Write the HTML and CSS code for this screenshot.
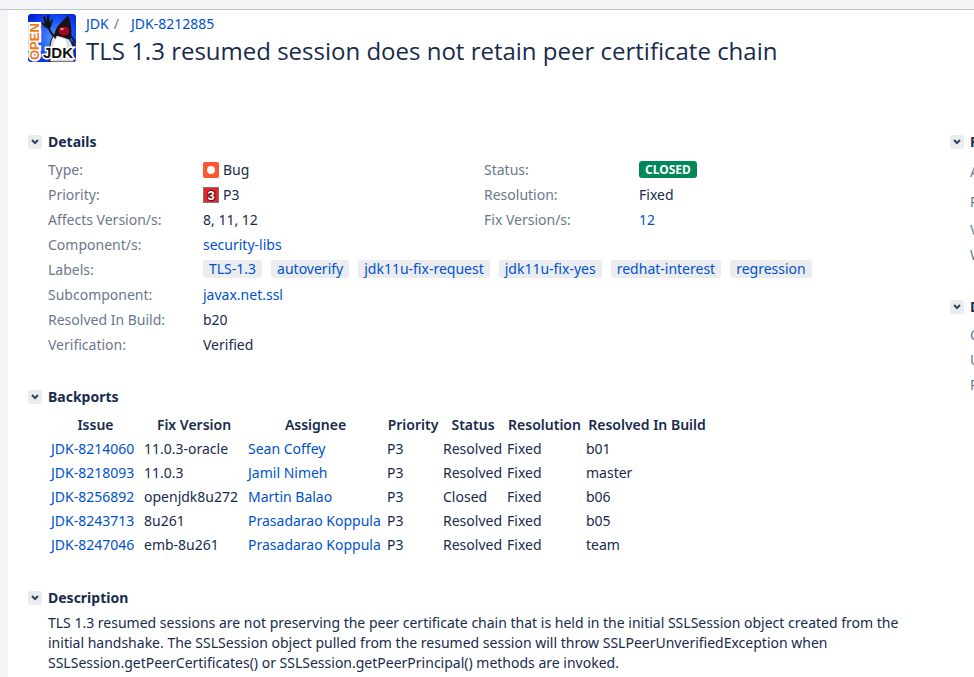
FILE: index.html
```html
<!DOCTYPE html>
<html lang="en">

<head>
    <meta charset="utf-8">
    <title>[JDK-8212885] TLS 1.3 resumed session does not retain peer certificate chain</title>
    <meta name="viewport" content="width=device-width, initial-scale=1.0">
    <link rel="stylesheet" href="styles.css">
</head>

<body>
    <div class="page">
        <header class="issue-header">
            <svg class="project-logo" viewBox="0 0 48 48" role="img" aria-label="OpenJDK">
                <defs>
                    <radialGradient id="sky" cx="55%" cy="50%" r="65%">
                        <stop offset="0" stop-color="#5a9cff" />
                        <stop offset="0.6" stop-color="#1450f5" />
                        <stop offset="1" stop-color="#0620d8" />
                    </radialGradient>
                    <clipPath id="logo-clip"><rect width="48" height="48" rx="3" /></clipPath>
                </defs>
                <g clip-path="url(#logo-clip)">
                    <rect width="48" height="48" fill="url(#sky)" />
                    <path d="M27 20c-5 5-6 13-5 28h24c1-10-1-18-5-23z" fill="#dcdce2" stroke="#111" />
                    <path d="M29 23c-4 6-5 12-4 20h12c3-7 2-14 0-18z" fill="#fff" />
                    <path d="M40 1C36 7 27 11 26 23c4-3 12 2 17 2C44 17 43 8 40 1z" fill="#151518" />
                    <path d="M43 22c2 2 3 5 5 7M44 28l3 4" fill="none" stroke="#151518" stroke-width="1.5" />
                    <path d="M28 24c-4-3-6-6-8-12" fill="none" stroke="#151518" stroke-width="2" />
                    <path d="M17 13l-4-4 1-1 3 2-2-7 2-1 2 6 0-7h2l1 8 2-4 1 1-2 7-3 2z" fill="#151518" />
                    <ellipse cx="36" cy="17" rx="6" ry="5" fill="#9c0c24" stroke="#32040c" />
                    <ellipse cx="34" cy="15" rx="2" ry="1" fill="#ef8b98" />
                    <text class="logo-open" transform="translate(11 46) rotate(-90)">OPEN</text>
                    <text class="logo-jdk" x="15" y="44">JDK</text>
                </g>
            </svg>
            <div class="issue-heading">
                <nav class="breadcrumbs" aria-label="Breadcrumb">
                    <a href="#">JDK</a><span class="separator">/</span><a href="#">JDK-8212885</a>
                </nav>
                <h1>TLS 1.3 resumed session does not retain peer certificate chain</h1>
            </div>
        </header>

        <div class="issue-body">
            <main class="issue-main">
                <section class="module">
                    <div class="module-header">
                        <button class="toggle" type="button" aria-label="Toggle details"><svg viewBox="0 0 14 14"><path d="M4 5l3 3 3-3" /></svg></button>
                        <h2>Details</h2>
                    </div>
                    <div class="module-content">
                        <dl class="details">
                            <div class="item">
                                <dt>Type:</dt>
                                <dd class="with-icon">
                                    <svg viewBox="0 0 16 16"><rect width="16" height="16" rx="2" fill="#ff5630" /><circle cx="8" cy="8" r="4" fill="#fff" /></svg>
                                    Bug
                                </dd>
                            </div>
                            <div class="item">
                                <dt>Status:</dt>
                                <dd><span class="lozenge">Closed</span></dd>
                            </div>
                            <div class="item">
                                <dt>Priority:</dt>
                                <dd class="with-icon">
                                    <svg viewBox="0 0 16 16"><rect x="0.5" y="0.5" width="15" height="15" fill="#e5242a" stroke="#777" /><text class="priority-digit" x="8" y="13">3</text></svg>
                                    P3
                                </dd>
                            </div>
                            <div class="item">
                                <dt>Resolution:</dt>
                                <dd>Fixed</dd>
                            </div>
                            <div class="item">
                                <dt>Affects Version/s:</dt>
                                <dd>8, 11, 12</dd>
                            </div>
                            <div class="item">
                                <dt>Fix Version/s:</dt>
                                <dd><a href="#">12</a></dd>
                            </div>
                            <div class="item full">
                                <dt>Component/s:</dt>
                                <dd><a href="#">security-libs</a></dd>
                            </div>
                            <div class="item full">
                                <dt>Labels:</dt>
                                <dd class="labels">
                                    <a href="#">TLS-1.3</a>
                                    <a href="#">autoverify</a>
                                    <a href="#">jdk11u-fix-request</a>
                                    <a href="#">jdk11u-fix-yes</a>
                                    <a href="#">redhat-interest</a>
                                    <a href="#">regression</a>
                                </dd>
                            </div>
                            <div class="item full">
                                <dt>Subcomponent:</dt>
                                <dd><a href="#">javax.net.ssl</a></dd>
                            </div>
                            <div class="item full">
                                <dt>Resolved In Build:</dt>
                                <dd>b20</dd>
                            </div>
                            <div class="item full">
                                <dt>Verification:</dt>
                                <dd>Verified</dd>
                            </div>
                        </dl>
                    </div>
                </section>

                <section class="module">
                    <div class="module-header">
                        <button class="toggle" type="button" aria-label="Toggle backports"><svg viewBox="0 0 14 14"><path d="M4 5l3 3 3-3" /></svg></button>
                        <h2>Backports</h2>
                    </div>
                    <div class="module-content">
                        <table class="backports">
                            <colgroup>
                                <col class="col-issue">
                                <col class="col-version">
                                <col class="col-assignee">
                                <col class="col-priority">
                                <col class="col-status">
                                <col class="col-resolution">
                                <col class="col-build">
                            </colgroup>
                            <thead>
                                <tr>
                                    <th>Issue</th>
                                    <th>Fix Version</th>
                                    <th>Assignee</th>
                                    <th>Priority</th>
                                    <th>Status</th>
                                    <th>Resolution</th>
                                    <th>Resolved In Build</th>
                                </tr>
                            </thead>
                            <tbody>
                                <tr>
                                    <td><a href="#">JDK-8214060</a></td>
                                    <td>11.0.3-oracle</td>
                                    <td><a href="#">Sean Coffey</a></td>
                                    <td>P3</td>
                                    <td>Resolved</td>
                                    <td>Fixed</td>
                                    <td>b01</td>
                                </tr>
                                <tr>
                                    <td><a href="#">JDK-8218093</a></td>
                                    <td>11.0.3</td>
                                    <td><a href="#">Jamil Nimeh</a></td>
                                    <td>P3</td>
                                    <td>Resolved</td>
                                    <td>Fixed</td>
                                    <td>master</td>
                                </tr>
                                <tr>
                                    <td><a href="#">JDK-8256892</a></td>
                                    <td>openjdk8u272</td>
                                    <td><a href="#">Martin Balao</a></td>
                                    <td>P3</td>
                                    <td>Closed</td>
                                    <td>Fixed</td>
                                    <td>b06</td>
                                </tr>
                                <tr>
                                    <td><a href="#">JDK-8243713</a></td>
                                    <td>8u261</td>
                                    <td><a href="#">Prasadarao Koppula</a></td>
                                    <td>P3</td>
                                    <td>Resolved</td>
                                    <td>Fixed</td>
                                    <td>b05</td>
                                </tr>
                                <tr>
                                    <td><a href="#">JDK-8247046</a></td>
                                    <td>emb-8u261</td>
                                    <td><a href="#">Prasadarao Koppula</a></td>
                                    <td>P3</td>
                                    <td>Resolved</td>
                                    <td>Fixed</td>
                                    <td>team</td>
                                </tr>
                            </tbody>
                        </table>
                    </div>
                </section>

                <section class="module">
                    <div class="module-header">
                        <button class="toggle" type="button" aria-label="Toggle description"><svg viewBox="0 0 14 14"><path d="M4 5l3 3 3-3" /></svg></button>
                        <h2>Description</h2>
                    </div>
                    <div class="module-content">
                        <p>TLS 1.3 resumed sessions are not preserving the peer certificate chain that is held in the initial SSLSession object created from the initial handshake. The SSLSession object pulled from the resumed session will throw SSLPeerUnverifiedException when SSLSession.getPeerCertificates() or SSLSession.getPeerPrincipal() methods are invoked.</p>
                    </div>
                </section>
            </main>

            <aside class="issue-side">
                <section class="module">
                    <div class="module-header">
                        <button class="toggle" type="button" aria-label="Toggle people"><svg viewBox="0 0 14 14"><path d="M4 5l3 3 3-3" /></svg></button>
                        <h2>People</h2>
                    </div>
                    <dl class="module-content">
                        <dt class="person">Assignee:</dt>
                        <dt class="person">Reporter:</dt>
                        <dt>Votes:</dt>
                        <dt>Watchers:</dt>
                    </dl>
                </section>
                <section class="module">
                    <div class="module-header">
                        <button class="toggle" type="button" aria-label="Toggle dates"><svg viewBox="0 0 14 14"><path d="M4 5l3 3 3-3" /></svg></button>
                        <h2>Dates</h2>
                    </div>
                    <dl class="module-content">
                        <dt>Created:</dt>
                        <dt>Updated:</dt>
                        <dt>Resolved:</dt>
                    </dl>
                </section>
            </aside>
        </div>
    </div>
</body>

</html>
```

FILE: styles.css
```css
* {
    box-sizing: border-box;
}

body {
    margin: 0;
    padding-top: 9px;
    background-color: #f4f5f7;
    color: #172b4d;
    font-family: "Noto Sans", "Open Sans", sans-serif;
    font-size: 14px;
    line-height: 20px;
    overflow: hidden;
}

a {
    color: #0052cc;
    text-decoration: none;
}

a:hover {
    text-decoration: underline;
}

h1,
h2,
p,
dl,
dd {
    margin: 0;
}

.page {
    min-height: 100vh;
    padding: 4px 0 0 20px;
    background-color: #fff;
    border-left: 8px solid #f4f5f7;
    box-shadow: 0 -1px 0 #c1c7d0;
    margin-top: 1px;
}

.issue-header {
    display: flex;
    gap: 10px;
    height: 98px;
}

.project-logo {
    width: 48px;
    height: 48px;
    flex: none;
}

.logo-open {
    font: bold 13px "Liberation Sans", sans-serif;
    fill: #f07818;
    stroke: #fff;
    stroke-width: 4px;
    paint-order: stroke;
}

.logo-jdk {
    font: bold 15px "Liberation Sans", sans-serif;
    fill: #111;
    stroke: #fff;
    stroke-width: 3px;
    paint-order: stroke;
}

.issue-heading h1 {
    font-family: "Open Sans", "Noto Sans", sans-serif;
    font-size: 24px;
    font-weight: 400;
    line-height: 34px;
    white-space: nowrap;
}

.separator {
    margin: 0 12px 0 5px;
    color: #6b778c;
}

/* the side column runs past the right edge */
.issue-body {
    display: grid;
    grid-template-columns: minmax(0, 1fr) 240px;
    column-gap: 30px;
    width: calc(100% + 216px);
    padding-top: 20px;
}

.module {
    margin-bottom: 30px;
}

.module-header {
    display: flex;
    align-items: center;
    gap: 6px;
    margin-bottom: 5px;
}

.module-header h2 {
    font-size: 14px;
    font-weight: 700;
    line-height: 20px;
}

.module-content {
    padding-left: 20px;
}

.toggle {
    width: 14px;
    height: 14px;
    padding: 0;
    border: none;
    border-radius: 3px;
    background-color: #ebecf0;
    cursor: pointer;
}

.toggle svg {
    display: block;
    fill: none;
    stroke: #344563;
    stroke-width: 2;
}

.details {
    display: grid;
    grid-template-columns: 1fr 1fr;
}

.item {
    display: grid;
    grid-template-columns: 155px 1fr;
    align-items: center;
    height: 25px;
}

.full {
    grid-column: 1 / -1;
}

dt {
    color: #6b778c;
}

.with-icon {
    display: flex;
    align-items: center;
    gap: 4px;
}

.with-icon svg {
    width: 16px;
    height: 16px;
}

.priority-digit {
    font: bold 13px "Liberation Sans", sans-serif;
    text-anchor: middle;
    fill: #fff;
    stroke: #5c1010;
    stroke-width: 2px;
    paint-order: stroke;
}

.lozenge {
    display: block;
    width: max-content;
    padding: 0 6px;
    border-radius: 3px;
    background-color: #00875a;
    color: #fff;
    font-size: 12px;
    font-weight: 700;
    line-height: 17px;
    text-transform: uppercase;
}

.labels {
    display: flex;
    gap: 9px;
    padding-bottom: 2px;
}

.labels a {
    padding: 0 6px;
    border-radius: 3px;
    background-color: #ebecf0;
    line-height: 18px;
}

.backports {
    table-layout: fixed;
    width: 663px;
    border-spacing: 2px;
    white-space: nowrap;
}

.backports th,
.backports td {
    padding: 1px;
}

.backports th {
    font-weight: 600;
}

.col-issue {
    width: 91px;
}

.col-version {
    width: 102px;
}

.col-assignee {
    width: 137px;
}

.col-priority {
    width: 54px;
}

.col-status {
    width: 62px;
}

.col-resolution {
    width: 77px;
}

.col-build {
    width: 124px;
}

.issue-side dt {
    line-height: 25px;
}

.issue-side .person {
    line-height: 30px;
}
```
